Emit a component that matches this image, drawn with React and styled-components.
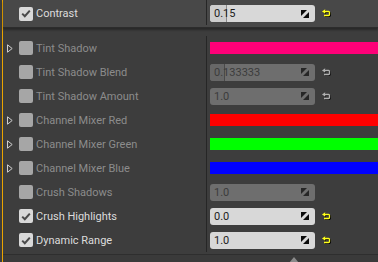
import React from "react";
import styled, { createGlobalStyle } from "styled-components";

const GlobalStyle = createGlobalStyle`
  html, body {
    margin: 0;
    padding: 0;
    background-color: #3d3d3d;
    font-family: Roboto, "Liberation Sans", sans-serif;
  }
`;

const Panel = styled.div`
  width: 378px;
  height: 262px;
  overflow: hidden;
  padding-left: 2px;
  box-sizing: border-box;
  background-color: #3d3d3d;
`;

const Frame = styled.div`
  border-left: 1px solid #eaa400;
  height: 100%;
  display: flex;
  flex-direction: column;
`;

const Header = styled.div`
  background-color: #484848;
  border-bottom: 1px solid #2c2c2c;
  box-shadow: 0 2px 2px rgba(0, 0, 0, 0.35);
`;

const Body = styled.div`
  padding-top: 8px;
`;

const RowWrapper = styled.div`
  display: grid;
  grid-template-columns: 203px 1px 1fr;
  height: ${p => (p.$top ? "27px" : "24px")};
  align-items: center;
`;

const NameCell = styled.div`
  display: flex;
  align-items: center;
  height: 100%;
`;

const ExpanderSlot = styled.div`
  width: 16px;
  display: flex;
  align-items: center;
  padding-left: 4px;
  box-sizing: border-box;
`;

const CheckBox = styled.div`
  width: 14px;
  height: 14px;
  border-radius: 2px;
  background-color: ${p => (p.$checked ? "#d9d9d9" : "#a6a6a6")};
  display: flex;
  align-items: center;
  justify-content: center;
  margin-right: 3px;
`;

const Label = styled.span`
  font-size: 11px;
  color: ${p => (p.$enabled ? "#dcdcdc" : "#8c8c8c")};
  white-space: nowrap;
`;

const Divider = styled.div`
  background-color: #262626;
  height: ${p => (p.$top ? "25px" : "100%")};
  align-self: start;
`;

const ValueCell = styled.div`
  display: flex;
  align-items: center;
  padding-left: 3px;
  height: 100%;
`;

const ColorBar = styled.div`
  height: 12px;
  flex: 1;
  background-color: ${p => p.$color};
`;

const SpinBox = styled.div`
  position: relative;
  width: 105px;
  height: 17px;
  border-radius: 3px;
  overflow: hidden;
  background-color: ${p => (p.$enabled ? "#d8d8d8" : "#6e6e6e")};
  display: flex;
  align-items: center;
  justify-content: space-between;
  padding: 0 6px 0 4px;
  box-sizing: border-box;
`;

const Fill = styled.div`
  position: absolute;
  left: 0;
  top: 0;
  bottom: 0;
  background-color: ${p => (p.$enabled ? "#cdcdcd" : "#676767")};
  border-right: 1px solid ${p => (p.$enabled ? "#8a8a8a" : "#4a4a4a")};
`;

const SpinValue = styled.span`
  position: relative;
  font-size: 11px;
  color: ${p => (p.$enabled ? "#1c1c1c" : "#3c3c3c")};
`;

const ResetSlot = styled.div`
  width: 9px;
  margin-left: 7px;
  display: flex;
  align-items: center;
`;

const Footer = styled.div`
  margin-top: 2px;
  border-top: 1px solid #2e2e2e;
  flex: 1;
  background-color: #3a3a3a;
  display: flex;
  justify-content: flex-start;
  padding-left: 286px;
  padding-top: 2px;
`;

function Expander() {
  return (
    <svg width="6" height="9" viewBox="0 0 6 9">
      <path d="M0.5 0.8 L5.2 4.5 L0.5 8.2 Z" fill="none" stroke="#cfcfcf" strokeWidth="1" />
    </svg>
  );
}

function Check() {
  return (
    <svg width="10" height="9" viewBox="0 0 10 9">
      <path d="M1.2 4.6 L3.8 7.2 L8.8 1.6" fill="none" stroke="#4a4a4a" strokeWidth="2" />
    </svg>
  );
}

function SpinArrows({ enabled }) {
  const c = enabled ? "#0a0a0a" : "#262626";
  return (
    <svg width="8" height="8" viewBox="0 0 8 8" style={{ position: "relative" }}>
      <polygon points="0,0 6,0 0,6" fill={c} />
      <polygon points="8,2 8,8 2,8" fill={c} />
    </svg>
  );
}

function ResetArrow({ enabled }) {
  const c = enabled ? "#ffff1a" : "#b0b0b0";
  const d = "M3 2.5 H6.5 Q7.5 2.5 7.5 3.5 V5.5 Q7.5 6.5 6.5 6.5 H2";
  return (
    <svg width="9" height="9" viewBox="0 0 9 9">
      <g transform="translate(0.8 0.8)" opacity={enabled ? 1 : 0.7}>
        <path d={d} fill="none" stroke="#000" strokeWidth="1.3" />
        <polygon points="0,2.5 3.2,0.2 3.2,4.8" fill="#000" />
      </g>
      <path d={d} fill="none" stroke={c} strokeWidth="1.3" />
      <polygon points="0,2.5 3.2,0.2 3.2,4.8" fill={c} />
    </svg>
  );
}

function Row({ item, top }) {
  const { name, checked, enabled, expandable, color, value, reset } = item;
  const fill = value !== undefined ? Math.min(parseFloat(value), 1) : 0;
  return (
    <RowWrapper $top={top}>
      <NameCell>
        <ExpanderSlot>{expandable && <Expander />}</ExpanderSlot>
        <CheckBox $checked={checked}>{checked && <Check />}</CheckBox>
        <Label $enabled={enabled}>{name}</Label>
      </NameCell>
      <Divider $top={top} />
      <ValueCell>
        {color && <ColorBar $color={color} />}
        {value !== undefined && (
          <>
            <SpinBox $enabled={enabled}>
              {fill > 0 && fill < 1 && (
                <Fill $enabled={enabled} style={{ width: `${fill * 100}%` }} />
              )}
              <SpinValue $enabled={enabled}>{value}</SpinValue>
              <SpinArrows enabled={enabled} />
            </SpinBox>
            <ResetSlot>{reset && <ResetArrow enabled={enabled} />}</ResetSlot>
          </>
        )}
      </ValueCell>
    </RowWrapper>
  );
}

const topItem = { name: "Contrast", checked: true, enabled: true, value: "0.15", reset: true };

const items = [
  { name: "Tint Shadow", expandable: true, color: "#ff0078" },
  { name: "Tint Shadow Blend", value: "0.133333", reset: true },
  { name: "Tint Shadow Amount", value: "1.0", reset: true },
  { name: "Channel Mixer Red", expandable: true, color: "#ff0000" },
  { name: "Channel Mixer Green", expandable: true, color: "#00ff00" },
  { name: "Channel Mixer Blue", expandable: true, color: "#0000ff" },
  { name: "Crush Shadows", value: "1.0" },
  { name: "Crush Highlights", checked: true, enabled: true, value: "0.0", reset: true },
  { name: "Dynamic Range", checked: true, enabled: true, value: "1.0", reset: true },
];

function App() {
  return (
    <Panel>
      <GlobalStyle />
      <Frame>
        <Header>
          <Row item={topItem} top />
        </Header>
        <Body>
          {items.map(item => (
            <Row key={item.name} item={item} />
          ))}
        </Body>
        <Footer>
          <svg width="10" height="6" viewBox="0 0 10 6">
            <polygon points="5,0 10,6 0,6" fill="#8a8a8a" />
          </svg>
        </Footer>
      </Frame>
    </Panel>
  );
}

export default App;
